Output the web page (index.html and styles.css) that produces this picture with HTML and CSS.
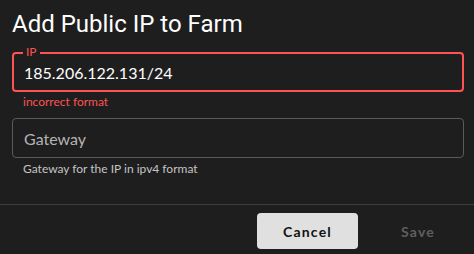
FILE: index.html
```html
<!DOCTYPE html>
<html>
<head>
<meta charset="utf-8">
<link rel="stylesheet" href="styles.css">
</head>
<body>
<div class="dialog">
  <h1 class="title">Add Public IP to Farm</h1>
  <div class="fields">
    <div class="field">
      <div class="box error">
        <span class="label">IP</span>
        <span class="value">185.206.122.131/24</span>
      </div>
      <div class="msg error-msg">incorrect format</div>
    </div>
    <div class="field">
      <div class="box">
        <span class="placeholder">Gateway</span>
      </div>
      <div class="msg">Gateway for the IP in ipv4 format</div>
    </div>
  </div>
  <div class="divider"></div>
  <div class="actions">
    <button class="btn cancel">Cancel</button>
    <button class="btn save">Save</button>
  </div>
</div>
</body>
</html>
```

FILE: styles.css
```css
html, body {
  margin: 0;
  padding: 0;
  background: #1e1e1e;
}
.dialog {
  width: 474px;
  height: 254px;
  background: #1e1e1e;
  font-family: Lato, "Noto Sans", sans-serif;
  overflow: hidden;
}
.title {
  margin: 0;
  padding: 8px 12px 0;
  font-family: Roboto, "Liberation Sans", sans-serif;
  font-weight: 400;
  font-size: 24px;
  line-height: 32px;
  color: #ffffff;
}
.fields {
  padding: 12px 10px 0 12px;
  display: flex;
  flex-direction: column;
}
.field {
  display: flex;
  flex-direction: column;
}
.box {
  position: relative;
  height: 40px;
  border: 1px solid #5a5a5a;
  border-radius: 4px;
  display: flex;
  align-items: center;
  padding: 0 11px;
  box-sizing: border-box;
}
.box.error {
  border: 2px solid #ff5252;
  padding: 0 10px;
}
.label {
  position: absolute;
  left: 9px;
  top: -9px;
  padding: 0 3px;
  background: #1e1e1e;
  color: #ff5252;
  font-size: 12px;
  line-height: 14px;
}
.value {
  color: #ffffff;
  font-size: 16px;
  padding-top: 1px;
}
.placeholder {
  color: #b4b4b4;
  font-size: 16px;
}
.msg {
  padding: 4px 11px 0;
  height: 22px;
  box-sizing: border-box;
  font-size: 12px;
  line-height: 14px;
  color: #c4c4c4;
}
.error-msg {
  color: #ff5252;
  padding-top: 3px;
  height: 26px;
}
.divider {
  margin-top: 24px;
  height: 1px;
  background: #3c3c3c;
}
.actions {
  display: flex;
  justify-content: flex-end;
  gap: 12px;
  padding: 8px 8px 0;
}
.btn {
  height: 36px;
  border: none;
  border-radius: 4px;
  font-family: Lato, "Noto Sans", sans-serif;
  font-weight: 700;
  font-size: 14px;
  letter-spacing: 1.2px;
  cursor: pointer;
}
.cancel {
  width: 101px;
  background: #e0e0e0;
  color: #111111;
}
.save {
  width: 96px;
  background: transparent;
  color: #5e5e5e;
}
```
